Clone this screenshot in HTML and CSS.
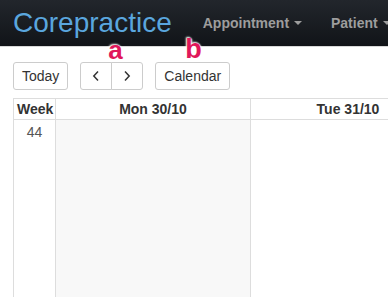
FILE: index.html
```html
<!DOCTYPE html>
<html>
<head>
<meta charset="utf-8">
<link rel="stylesheet" href="styles.css">
</head>
<body>
<nav class="navbar">
  <a class="brand">Corepractice</a>
  <ul class="nav">
    <li class="nav-item">Appointment <span class="caret"></span></li>
    <li class="nav-item">Patient <span class="caret"></span></li>
  </ul>
</nav>
<div class="content">
  <div class="toolbar">
    <button class="btn">Today</button>
    <div class="btn-group">
      <button class="btn btn-icon"><svg width="8" height="12" viewBox="0 0 8 12"><path d="M6 1.5 L1.8 6 L6 10.5" fill="none" stroke="#333" stroke-width="1.5"/></svg></button>
      <button class="btn btn-icon"><svg width="8" height="12" viewBox="0 0 8 12"><path d="M2 1.5 L6.2 6 L2 10.5" fill="none" stroke="#333" stroke-width="1.5"/></svg></button>
      <span class="marker marker-a">a</span>
    </div>
    <div class="cal-wrap">
      <button class="btn">Calendar</button>
      <span class="marker marker-b">b</span>
    </div>
  </div>
  <div class="grid-clip">
    <div class="grid">
      <div class="cell head week">Week</div>
      <div class="cell head">Mon 30/10</div>
      <div class="cell head">Tue 31/10</div>
      <div class="cell weeknum">44</div>
      <div class="cell day today"></div>
      <div class="cell day"></div>
    </div>
  </div>
</div>
</body>
</html>
```

FILE: styles.css
```css
* { box-sizing: border-box; }
html, body { margin: 0; padding: 0; background: #fff; overflow: hidden; }
body { font-family: "Liberation Sans", Arial, sans-serif; font-size: 14px; color: #333; width: 388px; height: 298px; }

.navbar {
  height: 47px;
  background: linear-gradient(#22262c, #111418);
  border-bottom: 1px solid #d8d8d8;
  display: flex;
  align-items: center;
  padding-left: 13px;
  white-space: nowrap;
  overflow: hidden;
}
.brand {
  font-size: 28px;
  color: #5aa6de;
  margin-top: -1px;
}
.nav { list-style: none; margin: 0 0 0 31px; padding: 0; display: flex; gap: 29px; }
.nav-item { font-weight: bold; color: #9d9d9d; font-size: 14px; margin-top: -1px; }
.caret {
  display: inline-block;
  width: 0; height: 0;
  border-left: 4px solid transparent;
  border-right: 4px solid transparent;
  border-top: 4px solid #9d9d9d;
  vertical-align: middle;
  margin-left: 1px;
  margin-top: -2px;
}

.content { padding: 15px 0 0 13px; }
.toolbar { display: flex; align-items: center; gap: 12px; height: 28px; }
.btn {
  height: 28px;
  font-family: inherit;
  font-size: 14px;
  color: #333;
  background: #fff;
  border: 1px solid #ccc;
  border-radius: 3px;
  padding: 0 8px;
  cursor: pointer;
}
.btn-group { display: flex; position: relative; }
.btn-group .btn-icon { width: 32px; padding: 0; display: flex; align-items: center; justify-content: center; }
.btn-group .btn-icon:first-child { border-radius: 3px 0 0 3px; }
.btn-group .btn-icon:nth-child(2) { border-radius: 0 3px 3px 0; margin-left: -1px; }
.cal-wrap { position: relative; }

.marker {
  position: absolute;
  font-weight: bold;
  color: #e0175a;
  text-shadow: 0 0 1px #fff, 0 0 2px #fff, 1px 1px 2px #fff, -1px -1px 2px #fff;
  line-height: 1;
}
.marker-a { font-size: 26px; left: 28px; top: -25px; }
.marker-b { font-size: 27px; left: 30px; top: -26px; }

.grid-clip { margin-top: 8px; width: 375px; height: 199px; overflow: hidden; }
.grid {
  display: grid;
  grid-template-columns: 42px 195px 195px;
  grid-template-rows: 21px 178px;
  width: 432px;
  border-left: 1px solid #ddd;
  border-top: 1px solid #ddd;
}
.cell { border-right: 1px solid #ddd; border-bottom: 1px solid #ddd; }
.head { font-weight: bold; color: #333; text-align: center; line-height: 20px; white-space: nowrap; overflow: hidden; }
.week { text-align: left; padding-left: 3px; }
.weeknum { border-bottom: none; text-align: center; color: #555; padding-top: 4px; }
.day { border-bottom: none; }
.today { background: #f8f8f8; }
```
